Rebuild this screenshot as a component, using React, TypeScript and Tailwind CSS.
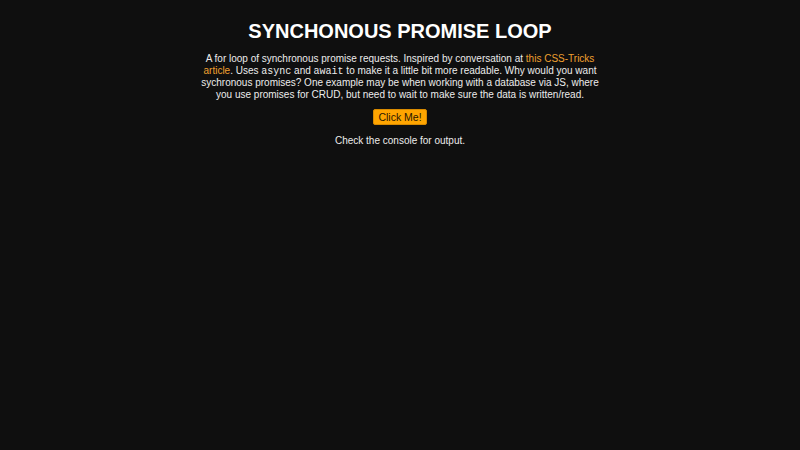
export default function App() {
  return (
    <div className="min-h-[450px] bg-[#0f0f0f] text-[#ececec] font-['Liberation_Sans',Arial,sans-serif] text-center pt-[19px]">
      <h1 className="text-[20px] font-bold text-white leading-[24px] mb-[10px]">SYNCHONOUS PROMISE LOOP</h1>
      <p className="mx-auto w-[400px] text-[10px] leading-[11.6px]">
        A for loop of synchronous promise requests. Inspired by conversation at{' '}
        <a href="#" className="text-[#f0a030]">this CSS-Tricks article</a>. Uses{' '}
        <code className="font-['Liberation_Mono',monospace]">async</code> and{' '}
        <code className="font-['Liberation_Mono',monospace]">await</code> to make it a little bit more readable. Why would you want
        sychronous promises? One example may be when working with a database via JS, where you use promises for CRUD, but need to
        wait to make sure the data is written/read.
      </p>
      <button className="mt-[9px] bg-[#ffa500] text-[#2a1600] text-[10.5px] leading-[12px] px-[4px] py-[1px] rounded-[2px] border border-[#d88a00]">
        Click Me!
      </button>
      <p className="mt-[7px] text-[10px] leading-[12px]">Check the console for output.</p>
    </div>
  )
}
